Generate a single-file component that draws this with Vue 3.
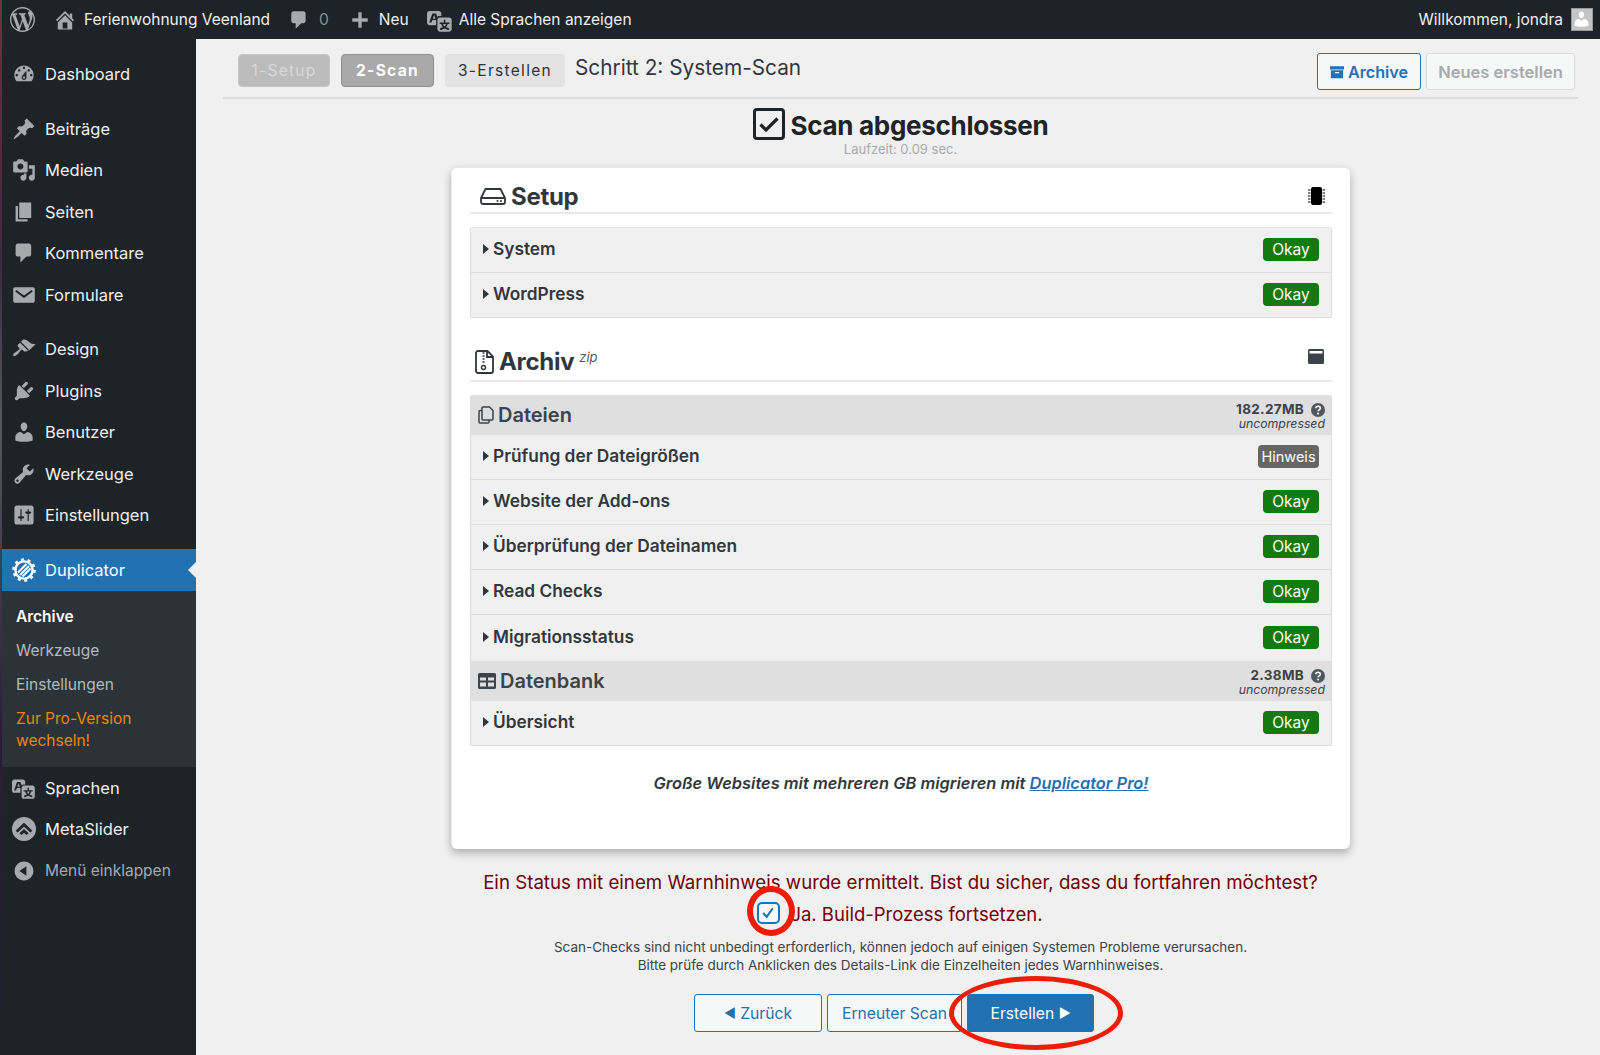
<script setup>
const icons = {
  wp: 'M20 10c0-5.51-4.49-10-10-10C4.48 0 0 4.49 0 10c0 5.52 4.48 10 10 10 5.51 0 10-4.48 10-10zM7.78 15.37L4.37 6.22c.55-.02 1.17-.08 1.17-.08.5-.06.44-1.13-.06-1.11 0 0-1.45.11-2.37.11-.18 0-.37 0-.58-.01C4.12 2.69 6.87 1.11 10 1.11c2.33 0 4.45.87 6.05 2.34-.68-.11-1.65.39-1.65 1.58 0 .74.45 1.36.9 2.1.35.61.55 1.36.55 2.46 0 1.49-1.4 5-1.4 5l-3.03-8.37c.54-.02.82-.17.82-.17.5-.05.44-1.25-.06-1.22 0 0-1.44.12-2.38.12-.87 0-2.33-.12-2.33-.12-.5-.03-.56 1.2-.06 1.22l.92.08 1.26 3.41zM17.41 10c.24-.64.74-1.87.43-4.25.7 1.29 1.05 2.71 1.05 4.25 0 3.29-1.73 6.24-4.4 7.78.97-2.59 1.94-5.2 2.92-7.78zM6.1 18.09C3.12 16.65 1.11 13.53 1.11 10c0-1.3.23-2.48.72-3.59C3.25 10.3 4.67 14.2 6.1 18.09zm4.03-6.63l2.58 6.98c-.86.29-1.76.45-2.71.45-.79 0-1.57-.11-2.29-.33.81-2.38 1.62-4.74 2.42-7.1z',
  home: 'M16 8.5l1.53 1.53-1.06 1.06L10 4.62l-6.47 6.47-1.06-1.06L10 2.5l4 4v-2h2v4zm-6-2.46l6 5.99V18H4v-5.97zM12 17v-5H8v5h4z',
  comment: 'M5 2h9c1.1 0 2 .9 2 2v7c0 1.1-.9 2-2 2h-2l-5 5v-5H5c-1.1 0-2-.9-2-2V4c0-1.1.9-2 2-2z',
  plus: 'M17 8.5v3h-5.5v5.5h-3v-5.5H3v-3h5.5V3h3v5.5h5.5z',
  translate: 'M11 7H9.49c-.63 0-1.25.3-1.59.7L7 5H4.13l-2.39 7h1.69l.74-2H7v4H2c-1.1 0-2-.9-2-2V5c0-1.1.9-2 2-2h7c1.1 0 2 .9 2 2v2zM6.51 9H4.49l1-2.93zM10 8h7c1.1 0 2 .9 2 2v7c0 1.1-.9 2-2 2h-7c-1.1 0-2-.9-2-2v-7c0-1.1.9-2 2-2zm7.25 5v-1.08h-3.17V9.75h-1.16v2.17H9.75V13h1.28c.11.85.56 1.85 1.28 2.62-.87.36-1.89.62-2.31.62-.01.02.22.97.2 1.46.84 0 2.21-.5 3.28-1.15 1.09.65 2.48 1.15 3.34 1.15-.02-.49.2-1.44.2-1.46-.43 0-1.49-.26-2.38-.63.7-.77 1.14-1.77 1.25-2.61h1.36zm-3.81 1.93c-.5-.46-.85-1.13-1.01-1.93h2.09c-.17.8-.51 1.47-1 1.93l-.04.03s-.03-.02-.04-.03z',
  dashboard: 'M3.76 16h12.48c1.1-1.37 1.76-3.11 1.76-5 0-4.42-3.58-8-8-8s-8 3.58-8 8c0 1.89.66 3.63 1.76 5zM10 4c.55 0 1 .45 1 1s-.45 1-1 1-1-.45-1-1 .45-1 1-1zM6 6c.55 0 1 .45 1 1s-.45 1-1 1-1-.45-1-1 .45-1 1-1zm8 0c.55 0 1 .45 1 1s-.45 1-1 1-1-.45-1-1 .45-1 1-1zm-5.37 5.55L12 7v6c0 1.1-.9 2-2 2s-2-.9-2-2c0-.57.24-1.08.63-1.45zM4 10c.55 0 1 .45 1 1s-.45 1-1 1-1-.45-1-1 .45-1 1-1zm12 0c.55 0 1 .45 1 1s-.45 1-1 1-1-.45-1-1 .45-1 1-1zm-5 3c0-.55-.45-1-1-1s-1 .45-1 1 .45 1 1 1 1-.45 1-1z',
  pin: 'M10.44 3.02l1.82-1.82 6.36 6.35-1.83 1.82c-1.05-.68-2.48-.57-3.41.36l-.75.75c-.92.93-1.04 2.35-.35 3.41l-1.83 1.82-2.41-2.41-2.8 2.79c-.42.42-3.38 2.71-3.8 2.29s1.86-3.39 2.28-3.81l2.79-2.79L4.1 9.36l1.83-1.82c1.05.69 2.48.57 3.4-.36l.75-.75c.93-.92 1.05-2.35.36-3.41z',
  media: 'M13 11V4c0-.55-.45-1-1-1h-1.67L9 1H5L3.67 3H2c-.55 0-1 .45-1 1v7c0 .55.45 1 1 1h10c.55 0 1-.45 1-1zM7 4.5c1.38 0 2.5 1.12 2.5 2.5S8.38 9.5 7 9.5 4.5 8.38 4.5 7 5.62 4.5 7 4.5zM14 6h5v10.5c0 1.38-1.12 2.5-2.5 2.5S14 17.88 14 16.5s1.12-2.5 2.5-2.5c.17 0 .34.02.5.05V9h-3V6zm-4 8.05V13h2v3.5c0 1.38-1.12 2.5-2.5 2.5S7 17.88 7 16.5 8.12 14 9.5 14c.17 0 .34.02.5.05z',
  page: 'M6 15V2h10v13H6zm-1 1h8v2H3V5h2v11z',
  mail: 'M2.5 3.5h15c.8 0 1.5.7 1.5 1.5v10c0 .8-.7 1.5-1.5 1.5h-15C1.7 16.5 1 15.8 1 15V5c0-.8.7-1.5 1.5-1.5zM3.6 5.8 2.7 7 10 12.4 17.3 7l-.9-1.2L10 10.5z',
  brush: 'M14.48 11.06L7.41 3.99l1.5-1.5c.5-.56 2.3-.47 3.51.32 1.21.8 1.43 1.28 2.91 2.1 1.18.64 2.45 1.26 4.45.85zm-.71.71L6.7 4.7 4.93 6.47c-.39.39-.39 1.02 0 1.41l1.06 1.06c.39.39.39 1.03 0 1.42-.6.6-1.43 1.11-2.21 1.69-.35.26-.7.53-1.01.84C1.43 13.23.4 14.85 1.2 15.65c.8.8 2.42-.23 3.76-1.58.31-.31.58-.66.85-1.02.57-.78 1.08-1.6 1.69-2.21.39-.39 1.02-.39 1.41 0l1.06 1.06c.39.39 1.02.39 1.41 0z',
  plug: 'M13.11 4.36L9.87 7.6 8 5.73l3.24-3.24c.35-.34 1.05-.2 1.56.32.52.51.66 1.21.31 1.55zm-8 1.77l.91-1.12 9.01 9.01-1.19.84c-.71.71-2.63 1.16-3.82 1.16H6.14L4.9 17.26c-.59.59-1.54.59-2.12 0-.59-.58-.59-1.53 0-2.12l1.24-1.24v-3.88c0-1.13.4-3.19 1.09-3.89zm7.26 3.97l3.24-3.24c.34-.35 1.04-.21 1.55.31.52.51.66 1.21.31 1.55l-3.24 3.25z',
  user: 'M10 9.25c-2.27 0-2.73-3.44-2.73-3.44C7 4.02 7.82 2 9.97 2c2.16 0 2.98 2.02 2.71 3.81 0 0-.41 3.44-2.68 3.44zm0 2.57L12.72 10c2.39 0 4.52 2.33 4.52 4.53v2.49s-3.65 1.13-7.24 1.13c-3.65 0-7.24-1.13-7.24-1.13v-2.49c0-2.25 1.94-4.48 4.47-4.48z',
  tools: 'M16.68 9.77c-1.34 1.34-3.3 1.67-4.95.99l-5.41 6.52c-.99.99-2.59.99-3.58 0s-.99-2.59 0-3.57l6.52-5.42c-.68-1.65-.35-3.61.99-4.95 1.28-1.28 3.12-1.62 4.72-1.06l-2.89 2.89 2.82 2.82 2.86-2.87c.53 1.58.18 3.39-1.08 4.65zM3.81 16.21c.4.39 1.04.39 1.43 0 .4-.4.4-1.04 0-1.43-.39-.4-1.03-.4-1.43 0-.39.39-.39 1.03 0 1.43z',
  settings: 'M18 16V4c0-1.1-.9-2-2-2H4c-1.1 0-2 .9-2 2v12c0 1.1.9 2 2 2h12c1.1 0 2-.9 2-2zM8 11h1c.55 0 1 .45 1 1s-.45 1-1 1H8v1.5c0 .28-.22.5-.5.5s-.5-.22-.5-.5V13H6c-.55 0-1-.45-1-1s.45-1 1-1h1V5.5c0-.28.22-.5.5-.5s.5.22.5.5V11zm5-2h-1c-.55 0-1-.45-1-1s.45-1 1-1h1V5.5c0-.28.22-.5.5-.5s.5.22.5.5V7h1c.55 0 1 .45 1 1s-.45 1-1 1h-1v5.5c0 .28-.22.5-.5.5s-.5-.22-.5-.5V9z',
  meta: 'M10 0a10 10 0 1 0 0 20 10 10 0 0 0 0-20zM10 4.8l7 6.7-1.7 1.5L10 8 4.7 13 3 11.5zM10 10l3.8 3.6-1.7 1.5L10 13.1l-2.1 2-1.7-1.5z',
  collapse: 'M10 2.16c4.33 0 7.84 3.51 7.84 7.84s-3.51 7.84-7.84 7.84S2.16 14.33 2.16 10 5.71 2.16 10 2.16zm2 11.72V6.12L6.18 9.97z'
}

const groups = [
  [{ label: 'Dashboard', icon: 'dashboard' }],
  [
    { label: 'Beiträge', icon: 'pin' },
    { label: 'Medien', icon: 'media' },
    { label: 'Seiten', icon: 'page' },
    { label: 'Kommentare', icon: 'comment' },
    { label: 'Formulare', icon: 'mail' }
  ],
  [
    { label: 'Design', icon: 'brush' },
    { label: 'Plugins', icon: 'plug' },
    { label: 'Benutzer', icon: 'user' },
    { label: 'Werkzeuge', icon: 'tools' },
    { label: 'Einstellungen', icon: 'settings' }
  ]
]
const after = [
  { label: 'Sprachen', icon: 'translate' },
  { label: 'MetaSlider', icon: 'meta' }
]
const setupRows = ['System', 'WordPress']
const fileRows = [
  { label: 'Prüfung der Dateigrößen', hint: true },
  { label: 'Website der Add-ons' },
  { label: 'Überprüfung der Dateinamen' },
  { label: 'Read Checks' },
  { label: 'Migrationsstatus', tall: true }
]
</script>

<template>
  <div class="page">
    <header class="adminbar">
      <svg class="ab-wp" viewBox="0 0 20 20"><path :d="icons.wp" /></svg>
      <svg class="ab-ico home" viewBox="0 0 20 20"><path :d="icons.home" /></svg>
      <span class="ab-text site">Ferienwohnung Veenland</span>
      <svg class="ab-ico cmt" viewBox="0 0 20 20"><path :d="icons.comment" /></svg>
      <span class="ab-count">0</span>
      <svg class="ab-ico plus" viewBox="0 0 20 20"><path :d="icons.plus" /></svg>
      <span class="ab-text neu">Neu</span>
      <svg class="ab-ico trans" viewBox="0 0 20 20"><path :d="icons.translate" /></svg>
      <span class="ab-text">Alle Sprachen anzeigen</span>
      <span class="ab-text welcome">Willkommen, jondra</span>
      <span class="avatar">
        <svg viewBox="0 0 20 20"><path :d="icons.user" /></svg>
      </span>
    </header>

    <div class="shell">
      <aside class="sidebar">
        <div v-for="(g, i) in groups" :key="i" class="group">
          <a v-for="m in g" :key="m.label" class="item">
            <svg class="m-ico" viewBox="0 0 20 20"><path :d="icons[m.icon]" /></svg>
            <span>{{ m.label }}</span>
          </a>
        </div>

        <a class="item active">
          <svg class="m-ico dup" viewBox="0 0 24 24">
            <circle cx="12" cy="12" r="8.6" fill="none" stroke="#fff" stroke-width="2.4" />
            <circle cx="12" cy="12" r="10.6" fill="none" stroke="#fff" stroke-width="2.4" stroke-dasharray="3 3.66" />
            <path d="M6 14.5 14.5 6M8 17 17 8M10.5 18.5 18.5 10.5" stroke="#fff" stroke-width="2" fill="none" />
          </svg>
          <span>Duplicator</span>
        </a>
        <div class="sub">
          <a class="sub-item current">Archive</a>
          <a class="sub-item">Werkzeuge</a>
          <a class="sub-item">Einstellungen</a>
          <a class="sub-item pro">Zur Pro-Version wechseln!</a>
        </div>

        <a v-for="m in after" :key="m.label" class="item">
          <svg class="m-ico" viewBox="0 0 20 20"><path :d="icons[m.icon]" /></svg>
          <span>{{ m.label }}</span>
        </a>
        <a class="item collapse">
          <svg class="m-ico" viewBox="0 0 20 20"><path :d="icons.collapse" /></svg>
          <span>Menü einklappen</span>
        </a>
      </aside>

      <main class="main">
        <div class="topbar">
          <div class="steps">
            <span class="step done">1-Setup</span>
            <span class="step now">2-Scan</span>
            <span class="step todo">3-Erstellen</span>
            <span class="step-title">Schritt 2: System-Scan</span>
          </div>
          <div class="top-actions">
            <a class="top-btn primary">
              <svg viewBox="0 0 16 16" class="arch"><path d="M0 1.5h16V5H0zM1 6h14v9H1zM5.5 8v1.5h5V8z" fill-rule="evenodd" /></svg>
              Archive
            </a>
            <a class="top-btn disabled">Neues erstellen</a>
          </div>
        </div>

        <div class="scan-title">
          <svg class="big-check" viewBox="0 0 32 32">
            <rect x="1.5" y="1.5" width="29" height="29" rx="2.5" fill="none" stroke="#1d2327" stroke-width="3" />
            <path d="M7.5 16.5 13 22 24.5 10.5" fill="none" stroke="#1d2327" stroke-width="3.2" />
          </svg>
          <h1>Scan abgeschlossen</h1>
        </div>
        <div class="runtime">Laufzeit: 0.09 sec.</div>

        <section class="card">
          <div class="sec-head setup">
            <svg class="hdd" viewBox="0 0 26 18">
              <path d="M1 11 5.5 2h15L25 11v4a2 2 0 0 1-2 2H3a2 2 0 0 1-2-2zM1 11h24" fill="none" stroke="#32373c" stroke-width="1.8" />
              <circle cx="21" cy="14" r="1" fill="#32373c" /><circle cx="17.5" cy="14" r="1" fill="#32373c" />
            </svg>
            <h2>Setup</h2>
            <svg class="chip" viewBox="0 0 17 18">
              <rect x="3" y="0" width="11" height="18" rx="2" fill="#000" />
              <path d="M0 3h2.5M0 6h2.5M0 9h2.5M0 12h2.5M0 15h2.5M14.5 3H17M14.5 6H17M14.5 9H17M14.5 12H17M14.5 15H17" stroke="#000" stroke-width="1.2" />
            </svg>
          </div>
          <div class="box">
            <div v-for="r in setupRows" :key="r" class="row">
              <span class="caret"></span><span class="row-label">{{ r }}</span>
              <span class="badge ok">Okay</span>
            </div>
          </div>

          <div class="sec-head archiv">
            <svg class="zipfile" viewBox="0 0 19 24">
              <path d="M1 3a2 2 0 0 1 2-2h9.5L18 6.5V21a2 2 0 0 1-2 2H3a2 2 0 0 1-2-2zM12 1v6h6" fill="none" stroke="#32373c" stroke-width="1.8" />
              <path d="M7.5 3h2M7.5 6h2M7.5 9h2M7.5 12h2" stroke="#32373c" stroke-width="1.5" />
              <circle cx="8.5" cy="17.5" r="2" fill="none" stroke="#32373c" stroke-width="1.4" />
            </svg>
            <h2>Archiv</h2><sup class="zip">zip</sup>
            <svg class="arch2" viewBox="0 0 16 15">
              <path d="M1.5 0h13A1.5 1.5 0 0 1 16 1.5V13.5A1.5 1.5 0 0 1 14.5 15h-13A1.5 1.5 0 0 1 0 13.5V1.5A1.5 1.5 0 0 1 1.5 0zM1.5 2v2.5h13V2z" fill="#3c434a" fill-rule="evenodd" />
            </svg>
          </div>
          <div class="box">
            <div class="box-head first">
              <svg class="h-ico" viewBox="0 0 16 18">
                <path d="M5 1h6.5L15 4.5V13a1 1 0 0 1-1 1H5a1 1 0 0 1-1-1V2a1 1 0 0 1 1-1zM4 4.5H2a1 1 0 0 0-1 1V16a1 1 0 0 0 1 1h8a1 1 0 0 0 1-1v-2" fill="none" stroke="#3c434a" stroke-width="1.5" />
              </svg>
              <span class="h-label">Dateien</span>
              <div class="size">
                <div class="size-top"><b>182.27MB</b>
                  <svg class="help" viewBox="0 0 14 14"><circle cx="7" cy="7" r="7" fill="#50575e" /><path d="M4.8 5.3C4.9 4 5.9 3.3 7.1 3.3c1.3 0 2.2.8 2.2 1.9 0 1.7-2.2 1.5-2.2 3" fill="none" stroke="#fff" stroke-width="1.5" /><circle cx="7.1" cy="10.5" r="1" fill="#fff" /></svg>
                </div>
                <i>uncompressed</i>
              </div>
            </div>
            <div v-for="r in fileRows" :key="r.label" class="row" :class="{ tall: r.tall }">
              <span class="caret"></span><span class="row-label">{{ r.label }}</span>
              <span v-if="r.hint" class="badge hint">Hinweis</span>
              <span v-else class="badge ok">Okay</span>
            </div>
            <div class="box-head db">
              <svg class="h-ico tbl" viewBox="0 0 18 16">
                <path d="M1.5 0h15A1.5 1.5 0 0 1 18 1.5v13a1.5 1.5 0 0 1-1.5 1.5h-15A1.5 1.5 0 0 1 0 14.5v-13A1.5 1.5 0 0 1 1.5 0zM2 4.5V7.5H8V4.5zM10 4.5V7.5H16V4.5zM2 9.5V13.5H8V9.5zM10 9.5V13.5H16V9.5z" fill="#3c434a" fill-rule="evenodd" />
              </svg>
              <span class="h-label">Datenbank</span>
              <div class="size">
                <div class="size-top"><b>2.38MB</b>
                  <svg class="help" viewBox="0 0 14 14"><circle cx="7" cy="7" r="7" fill="#50575e" /><path d="M4.8 5.3C4.9 4 5.9 3.3 7.1 3.3c1.3 0 2.2.8 2.2 1.9 0 1.7-2.2 1.5-2.2 3" fill="none" stroke="#fff" stroke-width="1.5" /><circle cx="7.1" cy="10.5" r="1" fill="#fff" /></svg>
                </div>
                <i>uncompressed</i>
              </div>
            </div>
            <div class="row">
              <span class="caret"></span><span class="row-label">Übersicht</span>
              <span class="badge ok">Okay</span>
            </div>
          </div>

          <p class="promo">Große Websites mit mehreren GB migrieren mit <a>Duplicator Pro!</a></p>
        </section>

        <p class="warn">Ein Status mit einem Warnhinweis wurde ermittelt. Bist du sicher, dass du fortfahren möchtest?</p>
        <div class="confirm">
          <span class="cb">
            <svg viewBox="0 0 16 16"><path d="M3.5 8.5 6.8 12 12.5 4" fill="none" stroke="#2271b1" stroke-width="2" /></svg>
            <span class="ring small"></span>
          </span>
          <span>Ja. Build-Prozess fortsetzen.</span>
        </div>
        <p class="note">Scan-Checks sind nicht unbedingt erforderlich, können jedoch auf einigen Systemen Probleme verursachen.<br />Bitte prüfe durch Anklicken des Details-Link die Einzelheiten jedes Warnhinweises.</p>
        <div class="actions">
          <a class="act back"><span class="tri">◀</span>&nbsp;Zurück</a>
          <a class="act rescan">Erneuter Scan</a>
          <a class="act build">Erstellen&nbsp;<span class="tri">▶</span><span class="ring big"></span></a>
        </div>
      </main>
    </div>
  </div>
</template>

<style>
html, body { margin: 0; padding: 0; height: 1055px; overflow: hidden; background: #f0f0f1; }
</style>

<style scoped>
* { box-sizing: border-box; }
.page { width: 1600px; height: 1055px; display: flex; flex-direction: column; font-family: Inter, "Liberation Sans", sans-serif; color: #3c434a; background: #f0f0f1; overflow: hidden; }
p, h1, h2 { margin: 0; }

.adminbar { height: 39px; flex: none; background: #1d2327; display: flex; align-items: center; padding-left: 10px; color: #f0f0f1; font-size: 15.5px; }
.adminbar svg { fill: #a7aaad; display: block; }
.ab-wp { width: 25px; height: 25px; margin-right: 18px; }
.ab-ico { width: 22px; height: 22px; }
.ab-ico.home { width: 24px; height: 24px; margin-right: 7px; }
.site { margin-right: 18px; }
.ab-ico.cmt { margin-right: 9px; }
.ab-count { color: #8c8f94; margin-right: 20px; }
.ab-ico.plus { margin-right: 8px; }
.neu { margin-right: 18px; }
.ab-ico.trans { width: 26px; height: 26px; margin-right: 6px; }
.welcome { margin-left: auto; margin-right: 8px; }
.avatar { width: 22px; height: 23px; background: #c4c4c4; border: 1.5px solid #9a9a9a; margin-right: 7px; display: block; overflow: hidden; }
.adminbar .avatar svg { fill: #fff; width: 19px; height: 20px; }

.shell { flex: 1; display: flex; min-height: 0; }
.sidebar { width: 196px; flex: none; background: #1d2327; padding-top: 14.5px; position: relative; color: #f0f0f1; }
.sidebar::before { content: ""; position: absolute; left: 0; top: -39px; width: 2px; height: 1055px; background: linear-gradient(#7a2a3a, #3b2a40 25%, #55585a 40%, #2d1a3a 70%, #1d2327); }
.group { margin-bottom: 13px; }
.group:last-of-type { margin-bottom: 13.25px; }
.item { height: 41.5px; display: flex; align-items: center; font-size: 16.5px; padding-left: 11.5px; }
.m-ico { width: 24px; height: 24px; fill: #a7aaad; margin-right: 9.5px; flex: none; }
.active { height: 42px; background: #2271b1; color: #fff; margin-left: 2px; padding-left: 9.5px; position: relative; }
.active::after { content: ""; position: absolute; right: 0; top: 13px; border: 8px solid transparent; border-right-color: #f0f0f1; border-left-width: 0; }
.sub { background: #2c3338; margin-left: 2px; height: 176px; padding: 9px 14px; font-size: 15.5px; color: #b4b9be; }
.sub-item { display: block; line-height: 22px; padding: 6px 0; }
.current { color: #fff; font-weight: 600; }
.pro { color: #f18500; }
.collapse { color: #a7aaad; font-size: 15.5px; }

.main { flex: 1; min-width: 0; padding: 0 22px 0 27px; }
.topbar { height: 60px; display: flex; justify-content: space-between; border-bottom: 2px solid #dcdcde; padding: 14px 3px 0 15px; }
.steps { display: flex; align-items: flex-start; }
.step { height: 33px; margin-top: 1px; padding-bottom: 1px; display: flex; align-items: center; justify-content: center; border-radius: 4px; font-size: 15.5px; letter-spacing: 1.3px; margin-right: 11px; }
.done { width: 92px; background: #bcbcbc; color: #d8d8d8; border: 1px solid #c8c8c8; }
.now { width: 93px; background: #a9a9a9; color: #fff; font-weight: 700; border: 1px solid #8f8f8f; }
.todo { width: 120px; background: #e3e3e4; color: #2c3338; margin-right: 10px; }
.step-title { font-size: 20.8px; color: #32373c; line-height: 26px; padding-top: 1.5px; }
.top-actions { display: flex; gap: 5px; }
.top-btn { height: 37px; display: flex; align-items: center; justify-content: center; border-radius: 3px; font-size: 16.5px; font-weight: 600; }
.primary { width: 104px; border: 1px solid #2271b1; background: #f6f7f7; color: #2271b1; gap: 4px; font-size: 16.2px; }
.disabled { width: 149px; border: 1px solid #dcdcde; background: #f6f7f7; color: #a7aaad; }
.arch { width: 14px; height: 14px; fill: #2271b1; fill-rule: evenodd; }

.scan-title { display: flex; align-items: center; justify-content: center; gap: 6px; margin-top: 9px; height: 32px; }
.big-check { width: 32px; height: 32px; }
h1 { font-size: 26px; font-weight: 700; color: #1d2327; letter-spacing: -0.3px; padding-top: 2px; }
.runtime { text-align: center; color: #a7aaad; font-size: 13px; height: 17px; line-height: 19px; }

.card { width: 899px; height: 682px; margin: 10px auto 0; background: #fff; border-radius: 6px; padding: 0 18px; border: 1px solid #e9e9ea; box-shadow: 0 4px 8px rgba(0,0,0,.28); border-width: 1px 0 0 1px; }
.sec-head { display: flex; align-items: center; border-bottom: 2px solid #e9e9ea; position: relative; }
.sec-head h2 { font-size: 24px; font-weight: 700; color: #32373c; letter-spacing: -0.3px; }
.setup { height: 46px; padding-left: 10px; padding-top: 12px; margin-bottom: 13px; }
.hdd { width: 26px; height: 18px; margin-right: 5px; }
.chip { width: 17px; height: 18px; position: absolute; right: 7px; top: 19px; }
.archiv { height: 64px; padding-left: 5px; padding-top: 25px; margin-bottom: 13px; }
.zipfile { width: 19px; height: 24px; margin-right: 5px; }
.zip { font-size: 13px; font-style: italic; color: #50575e; margin-left: 5px; position: relative; top: -5px; }
.arch2 { width: 16px; height: 15px; position: absolute; right: 8px; top: 31px; }

.box { border: 1px solid #dcdcde; border-top-color: #e2e2e3; border-radius: 2px; background: #f0f0f1; }
.row { height: 45px; display: flex; align-items: center; padding: 0 12px; border-bottom: 1px solid #dcdcde; }
.row.tall { height: 46px; border-bottom: 0; }
.row:last-child { border-bottom: 0; height: 44px; }
.caret { width: 0; height: 0; border-left: 6px solid #32373c; border-top: 5px solid transparent; border-bottom: 5px solid transparent; margin-right: 4px; margin-bottom: 3px; }
.row-label { font-size: 17.3px; font-weight: 600; color: #32373c; padding-bottom: 3px; }
.badge { margin-left: auto; height: 23px; margin-bottom: 1px; display: flex; align-items: center; justify-content: center; border-radius: 4px; color: #fff; font-size: 15.5px; padding-bottom: 1px; }
.ok { width: 56px; background: #137a10; }
.hint { width: 61px; background: #666; font-size: 14.5px; }
.box-head { background: #dfdfdf; display: flex; align-items: center; padding: 0 6px 0 7px; }
.first { height: 39px; padding-bottom: 1px; }
.db { height: 40px; }
.h-ico { width: 16px; height: 18px; margin-right: 4px; flex: none; }
.tbl { width: 18px; height: 16px; }
.h-label { font-size: 20px; font-weight: 600; color: #3c434a; }
.size { margin-left: auto; text-align: right; color: #3c434a; padding-top: 2px; }
.size-top { display: flex; align-items: center; justify-content: flex-end; gap: 7px; font-size: 13.5px; line-height: 15px; }
.size b { font-weight: 700; letter-spacing: .3px; }
.size i { display: block; font-size: 12.3px; line-height: 13px; color: #3c434a; }
.help { width: 14px; height: 14px; }
.promo { text-align: center; font-style: italic; font-weight: 600; font-size: 16.45px; color: #32373c; margin-top: 27px; }
.promo a { color: #2271b1; text-decoration: underline; }

.warn { text-align: center; color: #710000; font-size: 18.7px; line-height: 24px; margin-top: 21.5px; }
.confirm { display: flex; align-items: center; justify-content: center; color: #710000; font-size: 18.5px; height: 24px; margin-top: 7.5px; gap: 10px; margin-left: -1px; }
.cb { width: 23px; height: 22px; border: 2.5px solid #2271b1; border-radius: 5px; position: relative; background: #f6f7f7; margin-top: -3px; }
.cb svg { display: block; width: 18px; height: 17px; }
.ring { position: absolute; border-radius: 50%; border: 6px solid #ee1c05; pointer-events: none; }
.small { width: 48px; height: 50px; left: -12px; top: -18px; }
.note { text-align: center; font-size: 13.5px; line-height: 18px; color: #3c434a; margin-top: 12px; }
.actions { display: flex; justify-content: center; gap: 5px; margin-top: 20px; padding-right: 13px; }
.act { height: 38px; display: flex; align-items: center; justify-content: center; border-radius: 3px; border: 1px solid #2271b1; font-size: 15.7px; color: #2271b1; background: #f6f7f7; }
.tri { font-size: 13px; }
.back { width: 128px; }
.rescan { width: 135px; }
.build { width: 127px; background: #2271b1; color: #fff; position: relative; }
.big { width: 174px; height: 74px; left: -19px; top: -19px; border-width: 5px; }
</style>
